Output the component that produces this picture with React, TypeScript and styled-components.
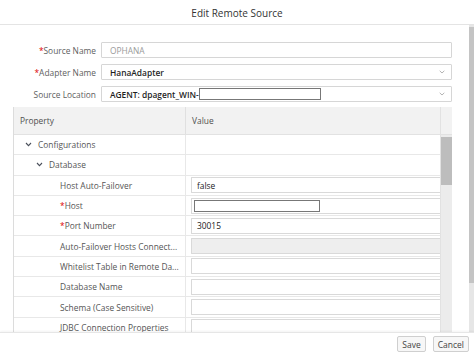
import React from "react";
import styled, { createGlobalStyle } from "styled-components";

const GlobalStyle = createGlobalStyle`
  html, body { margin: 0; padding: 0; background: #ffffff; }
  body { font-family: "Open Sans", "Noto Sans", sans-serif; }
  * { box-sizing: border-box; }
`;

const Dialog = styled.div`
  width: 474px;
  height: 355px;
  display: flex;
  flex-direction: column;
  background: #fff;
  overflow: hidden;
`;

const Header = styled.div`
  height: 25px;
  flex: none;
  display: flex;
  align-items: center;
  justify-content: center;
  padding-top: 2px;
  border-bottom: 1px solid #e4e4e4;
  font-size: 10px;
  color: #333;
`;

const Body = styled.div`
  flex: 1;
  display: flex;
  min-height: 0;
`;

const Content = styled.div`
  flex: 1;
  padding: 17px 17px 0 13px;
  display: flex;
  flex-direction: column;
  min-width: 0;
  overflow: hidden;
`;

const OuterScroll = styled.div`
  width: 5px;
  flex: none;
  background: #e6e6e6;
  display: flex;
  flex-direction: column;
  padding-top: 2px;
`;

const OuterThumb = styled.div`
  height: 256px;
  background: #c4c4c4;
`;

const Form = styled.div`
  display: grid;
  grid-template-columns: 83px 1fr;
  column-gap: 5px;
  row-gap: 6px;
  align-items: center;
  margin-bottom: 5px;
`;

const Label = styled.div`
  font-size: 8.4px;
  color: #606060;
  text-align: right;
  white-space: nowrap;
`;

const Req = styled.span`
  color: #d00;
`;

const Field = styled.div<{ $muted?: boolean }>`
  height: 16px;
  border: 1px solid #d6d6d6;
  border-radius: 1px;
  display: flex;
  align-items: center;
  padding: 0 0 0 8px;
  font-size: 8.4px;
  font-weight: ${(p) => (p.$muted ? 400 : 600)};
  color: ${(p) => (p.$muted ? "#9a9a9a" : "#1f1f1f")};
  background: #fff;
  position: relative;
`;

const Chevron = styled.svg`
  position: absolute;
  right: 6px;
  top: 5px;
`;

const Redact = styled.span<{ $w: number }>`
  display: inline-block;
  width: ${(p) => p.$w}px;
  height: 12px;
  border: 1px solid #777;
  background: #fff;
`;

const Table = styled.div`
  flex: 1;
  display: flex;
  border-left: 1px solid #dcdcdc;
  min-height: 0;
  overflow: hidden;
`;

const TableMain = styled.div`
  flex: 1;
  display: flex;
  flex-direction: column;
  min-width: 0;
`;

const HeadRow = styled.div`
  height: 28px;
  flex: none;
  display: grid;
  grid-template-columns: 171px 1fr;
  background: #f2f2f2;
  border-bottom: 1px solid #e2e2e2;
`;

const HeadCell = styled.div`
  display: flex;
  align-items: center;
  padding-left: 6px;
  font-size: 8.4px;
  color: #505050;
  & + & { border-left: 1px solid #e0e0e0; }
`;

const Row = styled.div`
  height: 20.3px;
  flex: none;
  display: grid;
  grid-template-columns: 171px 1fr;
  border-bottom: 1px solid #e8e8e8;
`;

const PropCell = styled.div<{ $indent: number }>`
  display: flex;
  align-items: center;
  padding-left: ${(p) => p.$indent}px;
  font-size: 8.4px;
  color: #555;
  white-space: nowrap;
  gap: 6px;
`;

const ValueCell = styled.div`
  border-left: 1px solid #e8e8e8;
  display: flex;
  align-items: center;
  padding-left: 5px;
`;

const ValueInput = styled.div<{ $disabled?: boolean }>`
  flex: 1;
  height: 16px;
  border: 1px solid #d9d9d9;
  border-right: none;
  border-radius: 1px 0 0 1px;
  background: ${(p) => (p.$disabled ? "#eeeeee" : "#fff")};
  display: flex;
  align-items: center;
  padding-left: 2px;
  font-size: 8.4px;
  color: #222;
`;

const Text = styled.span`
  padding-left: 3px;
`;

const InnerScroll = styled.div`
  width: 12px;
  flex: none;
  display: flex;
  flex-direction: column;
  background: #ececec;
  border-left: 1px solid #e2e2e2;
`;

const InnerScrollHead = styled.div`
  height: 28px;
  background: #f2f2f2;
  border-bottom: 1px solid #e2e2e2;
`;

const InnerThumb = styled.div`
  height: 48px;
  margin-top: 2px;
  background: #bdbdbd;
`;

const Footer = styled.div`
  height: 23px;
  flex: none;
  display: flex;
  justify-content: flex-end;
  align-items: center;
  gap: 7px;
  padding-right: 5px;
  border-top: 1px solid #e6e6e6;
  box-shadow: 0 -1px 2px rgba(0, 0, 0, 0.05);
`;

const Button = styled.button`
  height: 16px;
  padding: 0 4px;
  border: 1px solid #cfcfcf;
  border-radius: 2px;
  background: #f7f7f7;
  font-family: "Open Sans", sans-serif;
  font-size: 8.5px;
  color: #444;
  display: flex;
  align-items: center;
`;

const TreeChevron = () => (
  <svg width="7" height="5" viewBox="0 0 7 5">
    <path d="M1 1 L3.5 3.6 L6 1" fill="none" stroke="#4a4f5a" strokeWidth="1.1" />
  </svg>
);

const DropChevron = () => (
  <Chevron width="6" height="4" viewBox="0 0 6 4">
    <path d="M0.7 0.8 L3 3 L5.3 0.8" fill="none" stroke="#aaa" strokeWidth="0.9" />
  </Chevron>
);

type Leaf = { label: string; req?: boolean; value?: string; disabled?: boolean; redact?: boolean };

const leaves: Leaf[] = [
  { label: "Host Auto-Failover", value: "false" },
  { label: "Host", req: true, redact: true },
  { label: "Port Number", req: true, value: "30015" },
  { label: "Auto-Failover Hosts Connect...", disabled: true },
  { label: "Whitelist Table in Remote Da..." },
  { label: "Database Name" },
  { label: "Schema (Case Sensitive)" },
  { label: "JDBC Connection Properties" },
];

export default function App() {
  return (
    <>
      <GlobalStyle />
      <Dialog>
        <Header>Edit Remote Source</Header>
        <Body>
          <Content>
            <Form>
              <Label>
                <Req>*</Req>Source Name
              </Label>
              <Field $muted>OPHANA</Field>
              <Label>
                <Req>*</Req>Adapter Name
              </Label>
              <Field>
                HanaAdapter
                <DropChevron />
              </Field>
              <Label>Source Location</Label>
              <Field>
                AGENT: dpagent_WIN-
                <Redact $w={122} />
                <DropChevron />
              </Field>
            </Form>
            <Table>
              <TableMain>
                <HeadRow>
                  <HeadCell>Property</HeadCell>
                  <HeadCell>Value</HeadCell>
                </HeadRow>
                <Row>
                  <PropCell $indent={11}>
                    <TreeChevron />
                    Configurations
                  </PropCell>
                  <ValueCell />
                </Row>
                <Row>
                  <PropCell $indent={22}>
                    <TreeChevron />
                    Database
                  </PropCell>
                  <ValueCell />
                </Row>
                {leaves.map((l) => (
                  <Row key={l.label}>
                    <PropCell $indent={46}>
                      <span>
                        {l.req && <Req>*</Req>}
                        {l.label}
                      </span>
                    </PropCell>
                    <ValueCell>
                      <ValueInput $disabled={l.disabled}>
                        {l.redact ? <Redact $w={126} /> : l.value ? <Text>{l.value}</Text> : null}
                      </ValueInput>
                    </ValueCell>
                  </Row>
                ))}
              </TableMain>
              <InnerScroll>
                <InnerScrollHead />
                <InnerThumb />
              </InnerScroll>
            </Table>
          </Content>
          <OuterScroll>
            <OuterThumb />
          </OuterScroll>
        </Body>
        <Footer>
          <Button>Save</Button>
          <Button>Cancel</Button>
        </Footer>
      </Dialog>
    </>
  );
}
